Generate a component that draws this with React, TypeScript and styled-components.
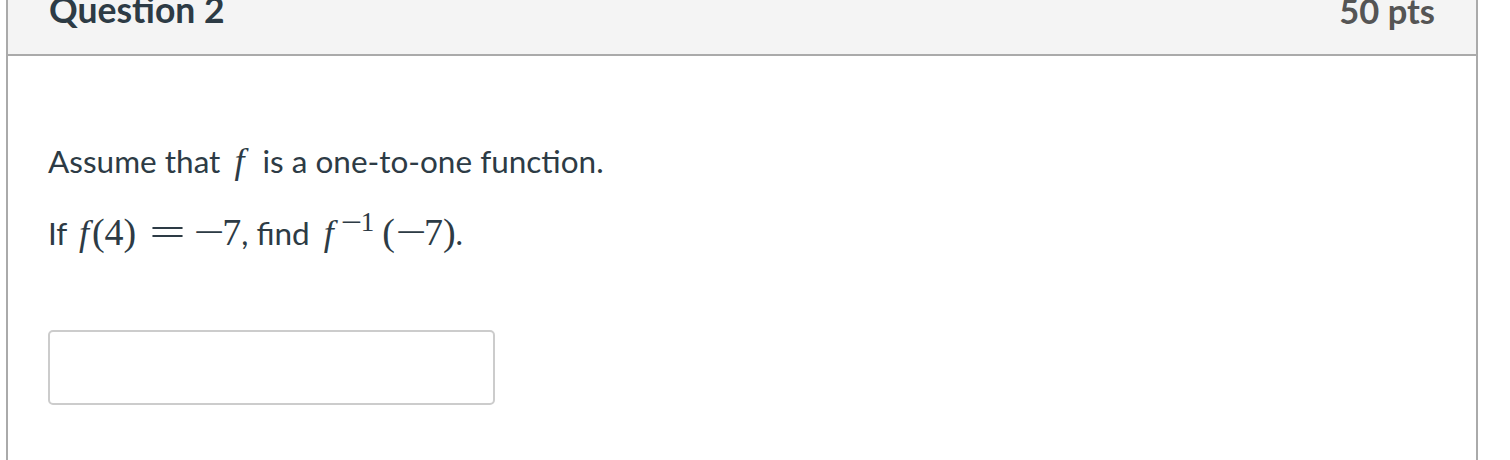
import React, { FC } from 'react';
import styled, { createGlobalStyle } from 'styled-components';

const GlobalStyle = createGlobalStyle`
  html, body {
    margin: 0;
    padding: 0;
    background: #ffffff;
    overflow: hidden;
  }
`;

const MATH_FONT = `'Liberation Serif', 'DejaVu Serif', serif`;

const Page = styled.div`
  width: 1510px;
  height: 460px;
  overflow: hidden;
  padding: 0 32px 0 6px;
  box-sizing: border-box;
`;

const QuestionCard = styled.div`
  margin-top: -20px;
  border: 2px solid #aaaaaa;
  background: #ffffff;
  font-family: Lato, 'Noto Sans', sans-serif;
  color: #2d3b45;
`;

const QuestionHeader = styled.div`
  display: flex;
  justify-content: space-between;
  align-items: flex-end;
  height: 74px;
  box-sizing: border-box;
  padding: 0 41px 23px 41px;
  background: #f4f4f4;
  border-bottom: 2px solid #aaaaaa;
  font-size: 35.5px;
  font-weight: 700;
`;

const QuestionName = styled.span`
  color: #2d3b45;
`;

const Points = styled.span`
  color: #555555;
  font-size: 34.5px;
`;

const QuestionBody = styled.div`
  padding: 83px 40px 120px;
  display: flex;
  flex-direction: column;
  align-items: flex-start;
`;

const Paragraph = styled.p`
  margin: 0 0 28px;
  font-size: 31.5px;
  line-height: 44px;
  white-space: nowrap;
`;

// italic math variable, spacing after it differs per use
const MathVar = styled.span<{ $after: number; $before?: number }>`
  font-family: ${MATH_FONT};
  font-style: italic;
  font-size: 36px;
  line-height: 1;
  margin: 0 ${(p) => p.$after}px 0 ${(p) => p.$before ?? 4}px;
`;

const MathText = styled.span`
  font-family: ${MATH_FONT};
  font-size: 38px;
  line-height: 1;
`;

const Op = styled.span<{ $w: number; $scale: number; $ml?: number; $mr?: number }>`
  display: inline-block;
  width: ${(p) => p.$w}px;
  margin: 0 ${(p) => p.$mr ?? 0}px 0 ${(p) => p.$ml ?? 0}px;
  text-align: center;
  transform: scaleX(${(p) => p.$scale});
`;

const Sup = styled.span`
  font-family: ${MATH_FONT};
  font-size: 27px;
  line-height: 1;
  position: relative;
  top: -14px;
  margin-right: 8px;
`;

const AnswerInput = styled.input`
  margin-top: 47px;
  width: 447px;
  height: 75px;
  box-sizing: border-box;
  border: 2px solid #cccccc;
  border-radius: 5px;
  background: #ffffff;
  outline: none;
`;

const App: FC = () => (
  <Page>
    <GlobalStyle />
    <QuestionCard>
      <QuestionHeader>
        <QuestionName>Question 2</QuestionName>
        <Points>50 pts</Points>
      </QuestionHeader>
      <QuestionBody>
        <Paragraph>
          Assume that <MathVar $before={6} $after={18}>f</MathVar>is a one-to-one function.
        </Paragraph>
        <Paragraph>
          If <MathVar $after={3}>f</MathVar>
          <MathText>
            (4)
            <Op $w={33} $scale={1.7} $ml={15} $mr={12}>
              =
            </Op>
            <Op $w={26} $scale={1.45}>
              −
            </Op>
            7
          </MathText>
          , find <MathVar $before={6} $after={8}>f</MathVar>
          <Sup>
            <Op $w={19} $scale={1.4}>
              −
            </Op>
            1
          </Sup>
          <MathText>
            (
            <Op $w={26} $scale={1.45} $ml={3}>
              −
            </Op>
            7)
          </MathText>
          .
        </Paragraph>
        <AnswerInput type="text" aria-label="answer" />
      </QuestionBody>
    </QuestionCard>
  </Page>
);

export default App;
